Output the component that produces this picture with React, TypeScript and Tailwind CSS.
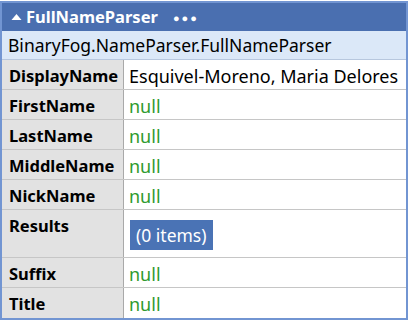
const rows: { name: string; value: string; kind: "text" | "null" | "list" }[] = [
  { name: "DisplayName", value: "Esquivel-Moreno, Maria Delores", kind: "text" },
  { name: "FirstName", value: "null", kind: "null" },
  { name: "LastName", value: "null", kind: "null" },
  { name: "MiddleName", value: "null", kind: "null" },
  { name: "NickName", value: "null", kind: "null" },
  { name: "Results", value: "(0 items)", kind: "list" },
  { name: "Suffix", value: "null", kind: "null" },
  { name: "Title", value: "null", kind: "null" },
];

export default function App() {
  return (
    <div className="w-[410px] h-[324px] bg-white pt-px font-['Noto_Sans','Open_Sans',sans-serif] text-[18px] leading-[24px] text-black">
      <div className="w-[408px] border-2 border-[#7295d2]">
        {/* Header */}
        <div className="h-[28px] bg-[#4a6fb0] flex items-center pl-[9px] text-white font-bold text-[16.5px]">
          <svg width="11" height="8" viewBox="0 0 11 8" className="mr-[4px]">
            <polygon points="5.5,1 10.5,7 0.5,7" fill="white" />
          </svg>
          <span>FullNameParser</span>
          <span className="ml-[15px] tracking-[2px] text-[11px] leading-none">●●●</span>
        </div>

        {/* Type row */}
        <div className="h-[29px] bg-[#dbe8f8] border-b border-[#b7c7de] flex items-center pl-[6px] text-[17.5px]">
          BinaryFog.NameParser.FullNameParser
        </div>

        {/* Property rows */}
        {rows.map((r, i) => (
          <div
            key={r.name}
            className={`grid grid-cols-[122px_1fr] ${r.kind === "list" ? "h-[48px]" : "h-[30px]"} ${
              i < rows.length - 1 ? "border-b border-[#c6c6c6]" : ""
            }`}
          >
            <div className="bg-[#e2e2e2] border-r border-[#a9a9a9] font-bold text-[16.5px] pl-[7px] pt-[4px]">
              {r.name}
            </div>
            <div className="pl-[5px] pt-[4px]">
              {r.kind === "text" && <span>{r.value}</span>}
              {r.kind === "null" && <span className="text-[#2f9a2f]">{r.value}</span>}
              {r.kind === "list" && (
                <div className="inline-block bg-[#4a73b5] text-white px-[6px] py-[3px] mt-[6px] ml-[1px] text-[17.5px]">
                  {r.value}
                </div>
              )}
            </div>
          </div>
        ))}
      </div>
    </div>
  );
}
